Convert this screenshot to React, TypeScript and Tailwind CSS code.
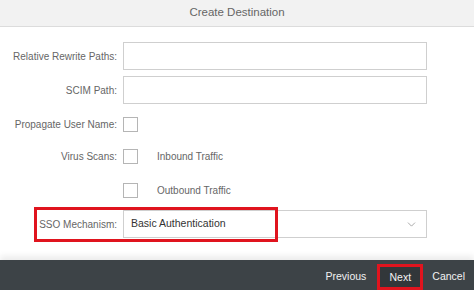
import { ChevronDown } from "lucide-react";

const Label = ({ text }: { text: string }) => (
  <div className="w-[123px] shrink-0 pr-[6px] text-right text-[10px] text-[#666]">
    {text}
  </div>
);

const Box = () => (
  <span className="block h-[15px] w-[15px] shrink-0 border border-[#b5b5b5] bg-white" />
);

export default function App() {
  return (
    <div className="flex h-[290px] w-[474px] flex-col overflow-hidden bg-white font-['Liberation_Sans',Arial,sans-serif]">
      <div className="flex h-[27px] shrink-0 items-center justify-center border-b border-[#dcdcdc] bg-[#f2f2f2] text-[11.5px] text-[#666]">
        Create Destination
      </div>

      <div className="flex flex-1 flex-col">
        <div className="mt-[15px] flex items-center">
          <Label text="Relative Rewrite Paths:" />
          <div className="h-[28px] w-[304px] border border-[#cfcfcf] bg-white" />
        </div>
        <div className="mt-[6px] flex items-center">
          <Label text="SCIM Path:" />
          <div className="h-[28px] w-[304px] border border-[#cfcfcf] bg-white" />
        </div>
        <div className="mt-[13px] flex items-center">
          <Label text="Propagate User Name:" />
          <Box />
        </div>
        <div className="mt-[17px] flex items-center">
          <Label text="Virus Scans:" />
          <Box />
          <span className="ml-[19px] text-[10px] text-[#666]">Inbound Traffic</span>
        </div>
        <div className="mt-[19px] flex items-center">
          <div className="w-[123px] shrink-0" />
          <Box />
          <span className="ml-[19px] text-[10px] text-[#666]">Outbound Traffic</span>
        </div>
        <div className="relative mt-[12px] flex items-center">
          <Label text="SSO Mechanism:" />
          <div className="flex h-[28px] w-[304px] items-center justify-between border border-[#cfcfcf] bg-white pl-[7px] pr-[8px]">
            <span className="text-[10.5px] text-[#333]">Basic Authentication</span>
            <ChevronDown size={13} strokeWidth={1.3} className="text-[#888]" />
          </div>
          <div className="pointer-events-none absolute left-[34px] top-[-3px] h-[35px] w-[244px] border-[3px] border-[#e0141e]" />
        </div>
      </div>

      <div className="relative flex h-[30px] shrink-0 items-end justify-end bg-[#3d4347] text-[10.5px] text-[#f2f2f2] shadow-[0_-4px_6px_rgba(0,0,0,0.08)]">
        <span className="mb-[5px] mr-[11px]">Previous</span>
        <span className="flex h-[26px] w-[46px] items-center justify-center border-[3px] border-[#e0141e] bg-[#32373a] pt-[1px]">
          Next
        </span>
        <span className="mb-[5px] ml-[9px] mr-[9px]">Cancel</span>
      </div>
    </div>
  );
}
